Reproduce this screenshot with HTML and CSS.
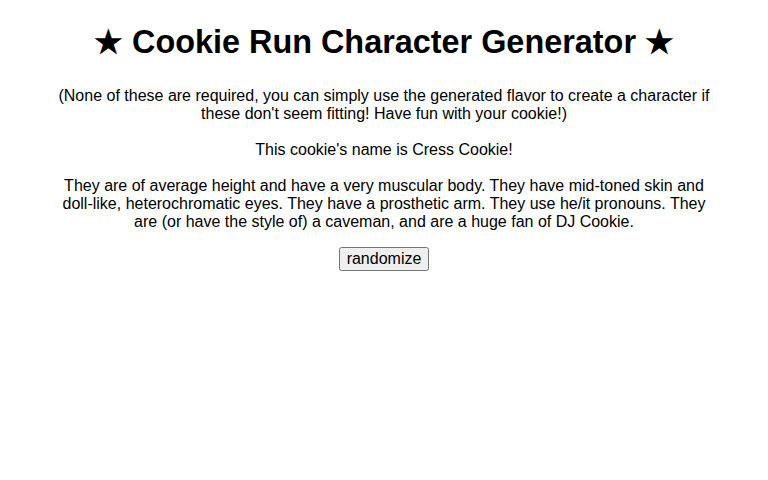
FILE: index.html
```html
<!DOCTYPE html>
<html lang="en">
<head>
    <meta charset="UTF-8">
    <meta name="viewport" content="width=device-width, initial-scale=1.0">
    <title>Cookie Run Character Generator</title>
    <link rel="stylesheet" href="styles.css">
</head>
<body>
    <div class="container">
        <h1>★ Cookie Run Character Generator ★</h1>

        <div class="output" id="output">
            (None of these are required, you can simply use the generated flavor to create a character if these don't seem fitting! Have fun with your cookie!)
            <br><br>
            This cookie's name is Cress Cookie!
            <br><br>
            They are of average height and have a very muscular body. They have mid-toned skin and doll-like, heterochromatic eyes. They have a prosthetic arm. They use he/it pronouns. They are (or have the style of) a caveman, and are a huge fan of DJ Cookie.
        </div>

        <p><button class="btn" id="randomize">randomize</button></p>
    </div>
</body>
</html>
```

FILE: styles.css
```css
body {
    font-family: "Liberation Sans", Arial, sans-serif;
    margin: 8px;
    background: white;
    color: black;
}
.container {
    max-width: 660px;
    margin: 0 auto;
    text-align: center;
}
h1 {
    font-size: 32.4px;
    margin: 15px 0 27px;
}
.output {
    font-size: 16px;
    line-height: 18px;
    margin-top: -1px;
}
.btn {
    font-family: "Liberation Sans", Arial, sans-serif;
    font-size: 16px;
}
```
